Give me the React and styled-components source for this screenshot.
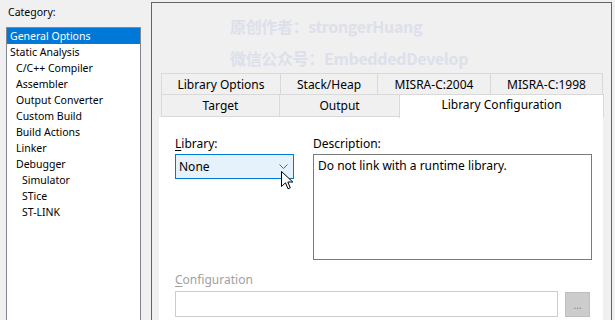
import styled, {createGlobalStyle} from "styled-components";

const GlobalStyle = createGlobalStyle`
  html, body {
    margin: 0;
    padding: 0;
    background: #f0f0f0;
  }
  body {
    font-family: "Noto Sans", "Noto Sans CJK SC", sans-serif;
    font-size: 12px;
    color: #000;
  }
`;

const categories = [
  {label: "General Options", level: 0, selected: true},
  {label: "Static Analysis", level: 0},
  {label: "C/C++ Compiler", level: 1},
  {label: "Assembler", level: 1},
  {label: "Output Converter", level: 1},
  {label: "Custom Build", level: 1},
  {label: "Build Actions", level: 1},
  {label: "Linker", level: 1},
  {label: "Debugger", level: 1},
  {label: "Simulator", level: 2},
  {label: "STice", level: 2},
  {label: "ST-LINK", level: 2},
];

const backTabs = [
  {label: "Library Options", width: 120},
  {label: "Stack/Heap", width: 98},
  {label: "MISRA-C:2004", width: 114},
  {label: "MISRA-C:1998", width: 113},
];

const frontTabs = [
  {label: "Target", width: 119},
  {label: "Output", width: 121},
  {label: "Library Configuration", width: 205, active: true},
];

export default function App() {
  return (
    <>
      <GlobalStyle />
      <Window>
        <Sidebar>
          <CategoryLabel>Category:</CategoryLabel>
          <TreeList>
            {categories.map((c) => (
              <TreeItem key={c.label} $level={c.level} $selected={c.selected}>
                {c.label}
              </TreeItem>
            ))}
          </TreeList>
        </Sidebar>
        <OptionsPanel>
          <Watermark>
            <WatermarkLine>原创作者：strongerHuang</WatermarkLine>
            <WatermarkLine>微信公众号：EmbeddedDevelop</WatermarkLine>
          </Watermark>
          <TabControl>
            <TabRow>
              {backTabs.map((t) => (
                <Tab key={t.label} $width={t.width}>
                  {t.label}
                </Tab>
              ))}
            </TabRow>
            <TabRow $front>
              {frontTabs.map((t) => (
                <Tab key={t.label} $width={t.width} $active={t.active}>
                  {t.label}
                </Tab>
              ))}
            </TabRow>
            <TabPage>
              <FieldRow>
                <Field>
                  <FieldLabel>
                    <u>L</u>ibrary:
                  </FieldLabel>
                  <ComboBox>
                    <span>None</span>
                    <svg width="9" height="6" viewBox="0 0 9 6">
                      <path d="M0.5 0.5 L4.5 4.5 L8.5 0.5" fill="none" stroke="#606060" strokeWidth="1" />
                    </svg>
                    <Cursor width="13" height="20" viewBox="0 0 13 20">
                      <path
                        d="M0.5 0.5 L0.5 15.5 L4.5 11.8 L7 17.8 L9.3 16.8 L6.8 11 L11.8 11 Z"
                        fill="#fff"
                        stroke="#000"
                        strokeWidth="1"
                        strokeLinejoin="miter"
                      />
                    </Cursor>
                  </ComboBox>
                </Field>
                <Field>
                  <FieldLabel>Description:</FieldLabel>
                  <DescriptionBox>Do not link with a runtime library.</DescriptionBox>
                </Field>
              </FieldRow>
              <FieldLabel $disabled>
                <u>C</u>onfiguration
              </FieldLabel>
              <ConfigRow>
                <ConfigInput />
                <BrowseButton>...</BrowseButton>
              </ConfigRow>
            </TabPage>
          </TabControl>
        </OptionsPanel>
      </Window>
    </>
  );
}

const Window = styled.div`
  display: flex;
  height: 320px;
  width: 615px;
  overflow: hidden;
`;

const Sidebar = styled.div`
  width: 151px;
  flex-shrink: 0;
  padding-left: 6px;
  box-sizing: border-box;
  font-size: 10.5px;
`;

const CategoryLabel = styled.div`
  height: 27px;
  line-height: 24px;
  padding-left: 2px;
`;

const TreeList = styled.div`
  width: 135px;
  height: 320px;
  box-sizing: border-box;
  border: 1px solid #828790;
  background: #fff;
`;

const TreeItem = styled.div`
  height: 16px;
  line-height: 16px;
  padding-left: ${(p) => 3 + p.$level * 6}px;
  background: ${(p) => (p.$selected ? "#0078d7" : "transparent")};
  color: ${(p) => (p.$selected ? "#fff" : "#000")};
  white-space: nowrap;
`;

const OptionsPanel = styled.div`
  width: 461px;
  height: 330px;
  margin-top: 2px;
  box-sizing: border-box;
  border: 1px solid #646464;
  display: flex;
  flex-direction: column;
`;

const Watermark = styled.div`
  height: 71px;
  padding-left: 78px;
  padding-top: 7px;
  box-sizing: border-box;
`;

const WatermarkLine = styled.div`
  font-family: "Noto Sans CJK SC", sans-serif;
  font-weight: 700;
  font-size: 16px;
  letter-spacing: -0.35px;
  line-height: 32px;
  height: 32px;
  color: #dde0eb;
  white-space: nowrap;
`;

const TabControl = styled.div`
  margin-left: 7px;
  width: 444px;
  display: flex;
  flex-direction: column;
  flex: 1;
`;

const TabRow = styled.div`
  display: flex;
  padding-left: 2px;
  height: ${(p) => (p.$front ? 21 : 22)}px;
  align-items: flex-end;
  position: relative;
  z-index: ${(p) => (p.$front ? 2 : 1)};
`;

const Tab = styled.div`
  width: ${(p) => p.$width}px;
  flex-shrink: 0;
  box-sizing: border-box;
  height: ${(p) => (p.$active ? 24 : 23)}px;
  margin-left: -1px;
  &:first-child {
    margin-left: 0;
  }
  margin-bottom: ${(p) => (p.$active ? -1 : 0)}px;
  border: 1px solid #d9d9d9;
  border-bottom: ${(p) => (p.$active ? "none" : "1px solid #d9d9d9")};
  background: ${(p) => (p.$active ? "#fff" : "#f0f0f0")};
  text-align: center;
  line-height: ${(p) => (p.$active ? 20 : 22)}px;
  white-space: nowrap;
  position: relative;
  z-index: ${(p) => (p.$active ? 3 : 1)};
`;

const TabPage = styled.div`
  flex: 1;
  background: #fff;
  padding: 20px 0 0 16px;
  box-sizing: border-box;
`;

const FieldRow = styled.div`
  display: flex;
  gap: 19px;
`;

const Field = styled.div`
  display: flex;
  flex-direction: column;
`;

const FieldLabel = styled.div`
  height: 17px;
  line-height: 14px;
  color: ${(p) => (p.$disabled ? "#a0a0a0" : "#000")};
  margin-top: ${(p) => (p.$disabled ? 13 : 0)}px;
  u {
    text-underline-offset: 2px;
  }
`;

const ComboBox = styled.div`
  position: relative;
  width: 119px;
  height: 25px;
  box-sizing: border-box;
  border: 1px solid #0078d7;
  background: #e5f1fb;
  display: flex;
  align-items: center;
  justify-content: space-between;
  padding: 0 5px 0 3px;
  span {
    line-height: 22px;
  }
`;

const Cursor = styled.svg`
  position: absolute;
  left: 105px;
  top: 16px;
`;

const DescriptionBox = styled.div`
  width: 279px;
  height: 106px;
  box-sizing: border-box;
  border: 1px solid #7a7a7a;
  padding: 1px 4px;
  line-height: 20px;
`;

const ConfigRow = styled.div`
  display: flex;
  align-items: center;
  gap: 7px;
  margin-top: 1px;
`;

const ConfigInput = styled.div`
  width: 383px;
  height: 26px;
  box-sizing: border-box;
  border: 1px solid #cccccc;
  background: #fff;
`;

const BrowseButton = styled.div`
  width: 25px;
  height: 25px;
  box-sizing: border-box;
  border: 1px solid #bfbfbf;
  background: #cccccc;
  color: #838383;
  font-size: 10px;
  display: flex;
  align-items: center;
  justify-content: center;
  padding-top: 2px;
`;
